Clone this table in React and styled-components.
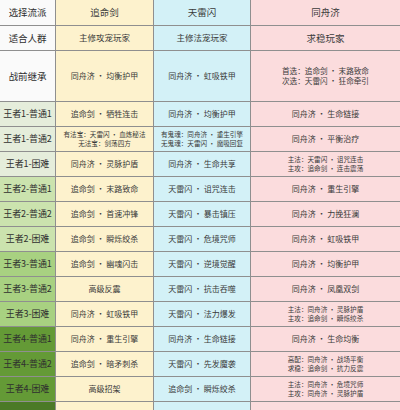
import React from 'react'
import styled, { createGlobalStyle } from 'styled-components'

const GlobalStyle = createGlobalStyle`
  html, body {
    margin: 0;
    padding: 0;
    background: #ffffff;
  }
  body {
    font-family: "Noto Sans CJK SC", "Noto Sans", sans-serif;
  }
`

const tones = {
  head: '#fafafa',
  k1: '#e5eddb',
  k2: '#cbe3ae',
  k3: '#a8d181',
  k4: '#649a36',
  k5: '#4b7a27',
}

const heads = ['选择流派', '追命剑', '天雷闪', '同舟济']

const rows = [
  { label: '王者1-普通1', tone: 'k1', a: '追命剑 • 牺牲连击', b: '同舟济 • 均衡护甲', c: '同舟济 • 生命链接' },
  {
    label: '王者1-普通2', tone: 'k1',
    a: ['有法宝：天雷闪 • 血炼秘法', '无法宝：剑荡四方'],
    b: ['有鬼魂：同舟济 • 重生引擎', '无鬼魂：天雷闪 • 魔吸回复'],
    c: '同舟济 • 平衡治疗',
  },
  { label: '王者1-困难', tone: 'k1', a: '同舟济 • 灵脉护盾', b: '同舟济 • 生命共享', c: ['主法：天雷闪 • 诅咒连击', '主攻：追命剑 • 连击震荡'] },
  { label: '王者2-普通1', tone: 'k2', a: '追命剑 • 末路致命', b: '天雷闪 • 诅咒连击', c: '同舟济 • 重生引擎' },
  { label: '王者2-普通2', tone: 'k2', a: '追命剑 • 首速冲锋', b: '天雷闪 • 暴击镇压', c: '同舟济 • 力挽狂澜' },
  { label: '王者2-困难', tone: 'k2', a: '追命剑 • 瞬烁绞杀', b: '天雷闪 • 危境咒师', c: '同舟济 • 虹吸铁甲' },
  { label: '王者3-普通1', tone: 'k3', a: '追命剑 • 幽魂闪击', b: '天雷闪 • 逆境觉醒', c: '同舟济 • 均衡护甲' },
  { label: '王者3-普通2', tone: 'k3', a: '高级反震', b: '天雷闪 • 抗击吞噬', c: '同舟济 • 凤凰双剑' },
  { label: '王者3-困难', tone: 'k3', a: '同舟济 • 虹吸铁甲', b: '天雷闪 • 法力爆发', c: ['主法：同舟济 • 灵脉护盾', '主攻：追命剑 • 瞬烁绞杀'] },
  { label: '王者4-普通1', tone: 'k4', a: '同舟济 • 重生引擎', b: '同舟济 • 生命链接', c: '同舟济 • 生命均衡' },
  { label: '王者4-普通2', tone: 'k4', a: '追命剑 • 暗矛刺杀', b: '天雷闪 • 先发魔袭', c: ['高配：同舟济 • 战场平衡', '求稳：追命剑 • 抗力反震'] },
  { label: '王者4-困难', tone: 'k4', a: '高级招架', b: '追命剑 • 瞬烁绞杀', c: ['主法：同舟济 • 危境咒师', '主攻：同舟济 • 灵脉护盾'] },
]

const Sheet = styled.div`
  width: 400px;
  height: 410px;
  overflow: hidden;
  display: grid;
  grid-template-columns: 55px 97px 96px 1fr;
  grid-template-rows: 25px 24px 50px repeat(12, 24px) 1fr;
  gap: 1px;
  background: #8f8f8f;
`

const Cell = styled.div`
  display: flex;
  flex-direction: column;
  align-items: center;
  justify-content: center;
  text-align: center;
  white-space: nowrap;
  color: #3a3a3a;
  font-size: ${p => p.$size || 8}px;
  line-height: ${p => (p.$size && p.$size < 7.5 ? 1.35 : 1.3)};
  background: ${p => p.$bg};
`

const Label = styled(Cell)`
  font-size: ${p => (p.$tone === 'head' ? 9.5 : 9)}px;
  letter-spacing: -0.1px;
  color: #2f2f2f;
  background: ${p => tones[p.$tone]};
`

const colBg = ['#fdf2cd', '#d3f1f7', '#fbdcdd']

const Lines = ({ text, bg, size }) => {
  const list = Array.isArray(text) ? text : [text]
  return (
    <Cell $bg={bg} $size={list.length > 1 ? size || 6.6 : 8}>
      {list.map((t, i) => <span key={i}>{t}</span>)}
    </Cell>
  )
}

export default function App() {
  return (
    <>
      <GlobalStyle />
      <Sheet>
        <Label $tone="head">{heads[0]}</Label>
        {heads.slice(1).map((h, i) => (
          <Cell key={h} $bg={colBg[i]} $size={9.5}>{h}</Cell>
        ))}

        <Label $tone="head">适合人群</Label>
        <Cell $bg={colBg[0]} $size={8.5}>主修攻宠玩家</Cell>
        <Cell $bg={colBg[1]} $size={8.5}>主修法宠玩家</Cell>
        <Cell $bg={colBg[2]} $size={9.5}>求稳玩家</Cell>

        <Label $tone="head">战前继承</Label>
        <Cell $bg={colBg[0]}>同舟济 • 均衡护甲</Cell>
        <Cell $bg={colBg[1]}>同舟济 • 虹吸铁甲</Cell>
        <Lines bg={colBg[2]} size={7.6} text={['首选：追命剑 • 末路致命', '次选：天雷闪 • 狂命牵引']} />

        {rows.map(r => (
          <React.Fragment key={r.label}>
            <Label $tone={r.tone}>{r.label}</Label>
            <Lines bg={colBg[0]} text={r.a} />
            <Lines bg={colBg[1]} text={r.b} />
            <Lines bg={colBg[2]} text={r.c} />
          </React.Fragment>
        ))}

        <Label $tone="k5" />
        <Cell $bg={colBg[0]} />
        <Cell $bg={colBg[1]} />
        <Cell $bg={colBg[2]} />
      </Sheet>
    </>
  )
}
